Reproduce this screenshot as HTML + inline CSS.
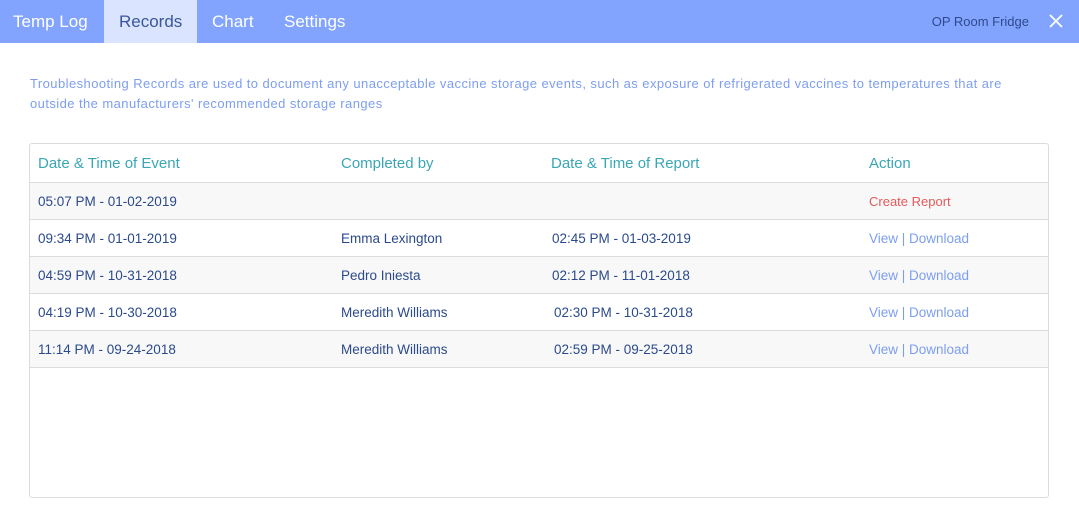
<!DOCTYPE html>
<html><head><style>
*{margin:0;padding:0;box-sizing:border-box}
body{width:1079px;height:531px;background:#fff;font-family:"Liberation Sans",sans-serif;position:relative;overflow:hidden}
.bar{position:absolute;left:0;top:0;width:1079px;height:43px;background:#82a4fe}
.tab{position:absolute;top:0;height:43px;line-height:43px;font-size:17px;color:#fff;padding:0 13px}
.tab.act{background:#dae4fe;color:#3a5698}
.fr{position:absolute;right:50px;top:0;line-height:43px;font-size:13px;color:#2e4a8c}
.desc{position:absolute;left:30px;top:74px;width:1040px;white-space:nowrap;font-size:13px;line-height:20px;color:#7d9ef0;letter-spacing:0.43px}
.tbl{position:absolute;left:29px;top:143px;width:1020px;height:355px;border:1px solid #dcdcdc;border-radius:3px}
.row{position:absolute;left:0;width:1018px;height:37px;border-bottom:1px solid #dcdcdc;font-size:13.5px;color:#2b4a8c}
.row span{position:absolute;top:0;line-height:37px}
.h{height:39px;font-size:15px;color:#3aa6b4}
.h span{line-height:39px}
.g{background:#f8f8f8}
.red{color:#e4595a}.lk{color:#7d9ef0}
</style></head><body>
<div class="bar">
<div class="tab" style="left:0">Temp Log</div>
<div class="tab act" style="left:104px;width:93px;padding:0 15px">Records</div>
<div class="tab" style="left:199px">Chart</div>
<div class="tab" style="left:271px">Settings</div>
<div class="fr">OP Room Fridge</div>
<svg style="position:absolute;left:1049px;top:14px" width="14" height="14"><path d="M1 1L13 13M13 1L1 13" stroke="#fff" stroke-width="1.8"/></svg>
</div>
<div class="desc">Troubleshooting Records are used to document any unacceptable vaccine storage events, such as exposure of refrigerated vaccines to temperatures that are<br>outside the manufacturers' recommended storage ranges</div>
<div class="tbl">
<div class="row h" style="top:0"><span style="left:8px">Date &amp; Time of Event</span><span style="left:311px">Completed by</span><span style="left:521px">Date &amp; Time of Report</span><span style="left:839px">Action</span></div>
<div class="row g" style="top:39px"><span style="left:8px">05:07 PM - 01-02-2019</span><span class="red" style="left:839px;font-size:13px">Create Report</span></div>
<div class="row" style="top:76px"><span style="left:8px">09:34 PM - 01-01-2019</span><span style="left:311px">Emma Lexington</span><span style="left:522px">02:45 PM - 01-03-2019</span><span class="lk" style="left:839px">View | Download</span></div>
<div class="row g" style="top:113px"><span style="left:8px">04:59 PM - 10-31-2018</span><span style="left:311px">Pedro Iniesta</span><span style="left:522px">02:12 PM - 11-01-2018</span><span class="lk" style="left:839px">View | Download</span></div>
<div class="row" style="top:150px"><span style="left:8px">04:19 PM - 10-30-2018</span><span style="left:311px">Meredith Williams</span><span style="left:524px">02:30 PM - 10-31-2018</span><span class="lk" style="left:839px">View | Download</span></div>
<div class="row g" style="top:187px"><span style="left:8px">11:14 PM - 09-24-2018</span><span style="left:311px">Meredith Williams</span><span style="left:524px">02:59 PM - 09-25-2018</span><span class="lk" style="left:839px">View | Download</span></div>
</div>
</body></html>
